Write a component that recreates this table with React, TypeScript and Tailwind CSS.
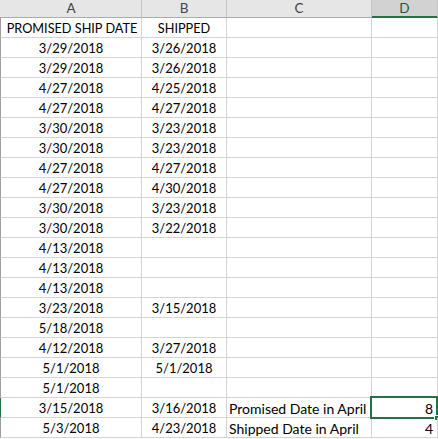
import React from "react";

type Row = { a: string; b?: string; c?: string; d?: string; selected?: boolean };

const rows: Row[] = [
  { a: "PROMISED SHIP DATE", b: "SHIPPED" },
  { a: "3/29/2018", b: "3/26/2018" },
  { a: "3/29/2018", b: "3/26/2018" },
  { a: "4/27/2018", b: "4/25/2018" },
  { a: "4/27/2018", b: "4/27/2018" },
  { a: "3/30/2018", b: "3/23/2018" },
  { a: "3/30/2018", b: "3/23/2018" },
  { a: "4/27/2018", b: "4/27/2018" },
  { a: "4/27/2018", b: "4/30/2018" },
  { a: "3/30/2018", b: "3/23/2018" },
  { a: "3/30/2018", b: "3/22/2018" },
  { a: "4/13/2018" },
  { a: "4/13/2018" },
  { a: "4/13/2018" },
  { a: "3/23/2018", b: "3/15/2018" },
  { a: "5/18/2018" },
  { a: "4/12/2018", b: "3/27/2018" },
  { a: "5/1/2018", b: "5/1/2018" },
  { a: "5/1/2018" },
  { a: "3/15/2018", b: "3/16/2018", c: "Promised Date in April", d: "8", selected: true },
  { a: "5/3/2018", b: "4/23/2018", c: "Shipped Date in April", d: "4" },
];

const cell = "h-[20px] border-r border-b border-[#d4d4d4] flex items-center pt-[2px] whitespace-nowrap overflow-hidden";

export default function App() {
  return (
    <div className="w-[438px] h-[439px] bg-white overflow-hidden text-black font-['Lato',sans-serif] text-[13px]">
      {/* column headers */}
      <div className="flex h-[18px] bg-[#e6e6e6] text-[#444444] text-[13.5px]">
        <div className="w-[142px] border-r border-b border-r-[#c6c6c6] border-b-[#ababab] flex items-center justify-center pl-[1px]">A</div>
        <div className="w-[85px] border-r border-b border-r-[#c6c6c6] border-b-[#ababab] flex items-center justify-center">B</div>
        <div className="w-[145px] border-r border-b border-r-[#c6c6c6] border-b-[#ababab] flex items-center justify-center">C</div>
        <div className="w-[66px] bg-[#d2d2d2] border-r border-r-[#c6c6c6] border-b-2 border-b-[#217346] flex items-center justify-center text-[#1d5c38] pt-[1px]">D</div>
      </div>

      {rows.map((r, i) => (
        <div key={i} className="flex">
          <div className={`${cell} w-[142px] justify-center border-l ${i === 0 ? "text-[12.7px] pl-[2px]" : ""} ${r.selected ? "border-l-[#217346]" : "border-l-[#9e9e9e]"}`}>
            {r.a}
          </div>
          <div className={`${cell} w-[85px] justify-center ${i === 0 ? "text-[12.7px]" : ""}`}>{r.b}</div>
          <div className={`${cell} w-[145px] justify-start pl-[2px] text-[14px]`}>{r.c}</div>
          <div className={`${cell} w-[66px] justify-end pr-[4px] relative overflow-visible text-[14px]`}>
            {r.d}
            {r.selected && (
              <>
                <div className="absolute -left-[2px] -top-[2px] right-[-1px] bottom-[-2px] border-2 border-[#217346]" />
                <div className="absolute right-[-3px] bottom-[-4px] w-[6px] h-[6px] bg-[#217346] border border-white" />
              </>
            )}
          </div>
        </div>
      ))}
    </div>
  );
}
